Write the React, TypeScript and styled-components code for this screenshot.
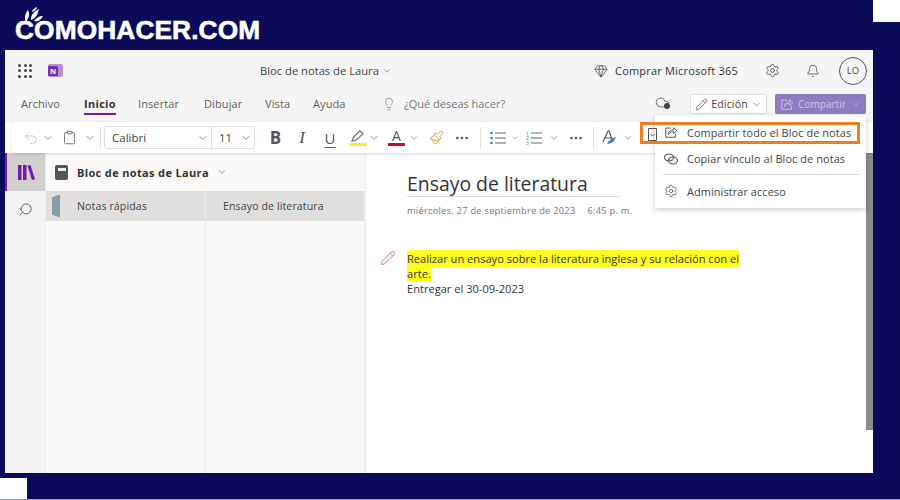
import React from "react";
import styled, { createGlobalStyle } from "styled-components";
import { ChevronDown, Undo2, Clipboard, Paintbrush, MoreHorizontal, Settings, Bell, Gem, Lightbulb, Cloud, Pencil, Search } from "lucide-react";

const Global = createGlobalStyle`
  html, body { margin: 0; padding: 0; width: 900px; height: 500px; overflow: hidden; background: #0b0b5a; }
  body { font-family: "Open Sans", "Noto Sans", sans-serif; color: #3b3a39; }
  * { box-sizing: border-box; }
`;
const Page = styled.div`position: relative; width: 900px; height: 500px; background: #0b0b5a; padding: 0 27px 26px 5px; border-bottom: 1px solid #9a9ac4; display: flex; flex-direction: column; overflow: hidden;`;
const Corner = styled.div<{ $tr?: boolean }>`
  position: absolute; background: #fff; width: 27px; height: 22px;
  ${p => p.$tr ? "top: 0; right: 0;" : "bottom: -1px; left: 0;"}
`;
const BrandBar = styled.div`height: 50px; display: flex; align-items: flex-end; padding: 0 0 5px 10px; position: relative;`;
const BrandText = styled.div`font-family: "Liberation Sans", sans-serif; font-weight: 700; font-size: 26.3px; line-height: 30px; letter-spacing: 0.1px; color: #fff; -webkit-text-stroke: 0.6px #fff;`;
const Sprout = styled.svg`position: absolute; left: 19px; top: 7px;`;
const Window = styled.div`position: relative; flex: 1; background: #fff; display: flex; flex-direction: column; overflow: hidden;`;
const Header = styled.div`height: 45px; flex: none; background: #f5f5f5; display: flex; align-items: center; padding: 0 6px 4px 13px;`;
const Waffle = styled.div`display: grid; grid-template-columns: repeat(3, 3px); gap: 2.5px; width: 14px;`;
const Dot = styled.span`width: 3px; height: 3px; background: #444; border-radius: 50%;`;
const AppLogo = styled.div`margin-left: 16px; width: 15px; height: 13px; background: #b98ad6; border-radius: 2px; display: flex; align-items: center;`;
const AppLogoTile = styled.div`width: 10px; height: 10px; background: #7a2fae; color: #fff; border-radius: 1px; font-size: 7.5px; line-height: 10px; font-weight: 700; text-align: center;`;
const DocTitle = styled.div`margin-left: 197px; width: 334px; font-size: 11.2px; color: #444; display: flex; align-items: center; gap: 3px;`;
const Buy = styled.div`width: 171px; display: flex; align-items: center; gap: 7px; font-size: 11px; letter-spacing: .2px; color: #333;`;
const HeadIcon = styled.div<{ $w: number }>`width: ${p => p.$w}px; display: flex; color: #444; position: relative; flex: none;`;
const CloudDot = styled.span`position: absolute; left: 9px; top: 8px; width: 6px; height: 6px; border-radius: 50%; background: #444;`;
const Avatar = styled.div`width: 28px; height: 28px; border: 1px solid #555; border-radius: 50%; font-size: 9.5px; display: flex; align-items: center; justify-content: center; color: #444;`;
const TabRow = styled.div`height: 27px; flex: none; background: #f5f5f5; display: flex; align-items: flex-start; padding-left: 16px;`;
const Tab = styled.div<{ $w: number; $on?: boolean }>`
  width: ${p => p.$w}px; height: 21px; font-size: 11px; line-height: 17px; letter-spacing: ${p => p.$on ? ".3px" : ".1px"}; color: ${p => p.$on ? "#333" : "#605e5c"}; font-weight: ${p => p.$on ? 700 : 400}; position: relative;
  ${p => p.$on ? `&::after { content: ""; position: absolute; left: 0; top: 18px; width: 32px; height: 2px; background: #7719aa; }` : ""}
`;
const Ask = styled.div`width: 273px; margin-left: 1px; font-size: 11px; line-height: 17px; color: #777; display: flex; align-items: center; gap: 8px;`;
const EditBtn = styled.div`margin-left: 20px; width: 77px; height: 20px; margin-top: -1px; background: #fff; border: 1px solid #ddd; border-radius: 2px; display: flex; align-items: center; justify-content: center; gap: 3px; font-size: 10.5px; letter-spacing: .2px; color: #444;`;
const ShareBtn = styled.div`margin-left: 8px; width: 91px; height: 20px; margin-top: -1px; background: #8e7cc3; border-radius: 2px; display: flex; align-items: center; justify-content: center; gap: 4px; font-size: 10px; color: #c9c0e6;`;
const Toolbar = styled.div`height: 31px; flex: none; margin: 0 0 0 7px; padding-left: 10px; background: #fff; border-radius: 4px 0 0 4px; box-shadow: 0 1px 3px rgba(0,0,0,.14); display: flex; align-items: center; position: relative; z-index: 1;`;
const TB = styled.div<{ $w: number; $c?: string }>`width: ${p => p.$w}px; flex: none; display: flex; align-items: center; justify-content: center; color: ${p => p.$c || "#555"};`;
const Sep = styled.div<{ $l?: number }>`width: 1px; height: 22px; background: #e3e3e3; flex: none; margin: 0 3px 0 ${p => p.$l ?? 3}px;`;
const FontBox = styled.div`width: 108px; height: 23px; flex: none; border: 1px solid #e0e0e0; border-radius: 3px 0 0 3px; display: flex; align-items: center; justify-content: space-between; padding: 0 2px 0 7px; font-size: 11.5px; color: #444;`;
const SizeBox = styled(FontBox)`width: 43px; border-left: 0; border-radius: 0 3px 3px 0; padding-left: 7px;`;
const BoldGlyph = styled.span`font-size: 17px; font-weight: 700; color: #555;`;
const ItalicGlyph = styled.span`font-family: "Liberation Serif", serif; font-style: italic; font-size: 17px; color: #555;`;
const UnderGlyph = styled.span`font-size: 15px; color: #555; text-decoration: underline; text-underline-offset: 3px; text-decoration-thickness: 1px;`;
const Stack = styled.div`display: flex; flex-direction: column; align-items: center; width: 16px; flex: none;`;
const Bar = styled.div<{ $c: string }>`width: 17px; height: 3px; background: ${p => p.$c}; flex: none;`;
const LetterA = styled.span`font-size: 14px; line-height: 14px; color: #555;`;
const Body = styled.div`flex: 1; min-height: 0; display: flex;`;
const Rail = styled.div`width: 41px; flex: none; background: #f3f2f1; display: flex; flex-direction: column; border-right: 1px solid #eee;`;
const RailOn = styled.div`height: 38px; background: #d2d0ce; border-left: 2px solid #7719aa; display: flex; align-items: center; justify-content: center;`;
const RailItem = styled.div`height: 36px; display: flex; align-items: center; justify-content: center; color: #555;`;
const Nav = styled.div`width: 320px; flex: none; background: #faf9f8; display: flex; flex-direction: column; border-right: 1px solid #eee;`;
const NotebookRow = styled.div`height: 38px; flex: none; display: flex; align-items: center; padding-left: 9px; font-size: 11px; font-weight: 700; letter-spacing: .35px; color: #333;`;
const NotebookIcon = styled.div`width: 13px; height: 15px; background: #555; border-radius: 2px; margin-right: 9px; display: flex; justify-content: center; padding-top: 3px;`;
const NotebookLine = styled.div`width: 8px; height: 3px; background: #eee;`;
const NotebookChev = styled.div`margin-left: 8px; display: flex;`;
const Columns = styled.div`flex: 1; display: flex;`;
const Col = styled.div<{ $w: number }>`width: ${p => p.$w}px; flex: none; border-right: 1px solid #eeedec;`;
const Row = styled.div<{ $pad: number }>`height: 30px; background: #e1dfdd; display: flex; align-items: center; font-size: 10.6px; letter-spacing: .1px; color: #444; padding-left: ${p => p.$pad}px; position: relative;`;
const SectionTab = styled.div`width: 8px; height: 23px; background: #8a9ba3; margin-right: 17px; margin-left: 6px; clip-path: polygon(0 12%, 100% 0, 100% 100%, 0 88%);`;
const Content = styled.div`flex: 1; position: relative; padding: 19px 0 0 41px; display: flex;`;
const Note = styled.div`width: 345px;`;
const Title = styled.div`font-size: 19.4px; line-height: 24px; width: 212px; color: #333; border-bottom: 1px solid #ddd; white-space: nowrap;`;
const DateLine = styled.div`margin-top: 8px; font-size: 9.3px; line-height: 12px; letter-spacing: .25px; color: #777; display: flex; gap: 12px;`;
const Para = styled.div`margin-top: 34px; font-size: 11.1px; line-height: 15px; color: #333; position: relative;`;
const Mark = styled.mark`background: #ffff1e; color: #333; padding: 1px 0;`;
const PenMark = styled.div`position: absolute; left: -27px; top: -1px; color: #c26a75;`;
const Scroll = styled.div`position: absolute; right: 0; top: 0; width: 7px; height: 277px; background: #8b8b8b;`;
const Menu = styled.div`position: absolute; left: 650px; top: 65px; width: 211px; height: 93px; background: #fff; box-shadow: 0 2px 6px rgba(0,0,0,.2); z-index: 3; padding: 6px 0 0 9px; display: flex; flex-direction: column;`;
const MenuItem = styled.div<{ $h: number }>`height: ${p => p.$h}px; flex: none; display: flex; align-items: center; gap: 9px; font-size: 10.9px; letter-spacing: .1px; color: #444; white-space: nowrap;`;
const MenuSep = styled.div`height: 1px; width: 197px; background: #ddd; margin: 0 0 4px -1px; flex: none;`;
const Highlight = styled.div`position: absolute; left: 635px; top: 72px; width: 220px; height: 22px; border: 3px solid #ed7d22; z-index: 4; pointer-events: none;`;
const Stub = styled.div`position: absolute; left: 5px; top: 3px; display: flex;`;

const ShareIcon = ({ c = "#555", s = 14 }: { c?: string; s?: number }) => (
  <svg width={s} height={s} viewBox="0 0 16 16" fill="none" stroke={c} strokeWidth="1.1">
    <path d="M8 3.500H2v10.500h11V10" />
    <path d="M5 11c0-3.500 2.500-5.500 6-5.500V3l3.500 3.500-3.500 3.500V7.500c-2.500 0-4.500 1-6 3.500z" />
  </svg>
);
const HighlighterIcon = () => (
  <svg width="16" height="13" viewBox="0 0 16 13" fill="none" stroke="#666" strokeWidth="1.1">
    <path d="M2 11l1.500-4L10 .8l3 3L6.500 10 2 11z" />
  </svg>
);
const Library = () => (
  <svg width="17" height="15" viewBox="0 0 17 15" fill="#7719aa"><rect x="0" y="0" width="3.500" height="15" /><rect x="5" y="0" width="3.500" height="15" /><path d="M9.500 0.800l3-.8L17 14.200l-3 .8z" /></svg>
);
const StylesIcon = () => (
  <svg width="18" height="17" viewBox="0 0 18 17" fill="none"><path d="M2 13L7 2h1l4 11M4 9h6" stroke="#555" strokeWidth="1.2" /><path d="M6 15c1-3 5-6 9-7-1 3-4 7-9 7z" fill="#3f82c4" /></svg>
);
const BulletIcon = () => (
  <svg width="16" height="14" viewBox="0 0 16 14">
    <circle cx="1.500" cy="2" r="1.300" fill="#2f7fb8" /><circle cx="1.500" cy="7" r="1.300" fill="#2f7fb8" /><circle cx="1.500" cy="12" r="1.300" fill="#2f7fb8" />
    <path d="M5 2h11M5 7h11M5 12h11" stroke="#666" strokeWidth="1" />
  </svg>
);
const NumberIcon = () => (
  <svg width="16" height="14" viewBox="0 0 16 14">
    <text x="0" y="4.500" fontSize="5" fill="#2f7fb8" fontFamily="Open Sans">1</text>
    <text x="0" y="9.200" fontSize="5" fill="#2f7fb8" fontFamily="Open Sans">2</text>
    <text x="0" y="13.800" fontSize="5" fill="#2f7fb8" fontFamily="Open Sans">3</text>
    <path d="M5 2h11M5 7h11M5 12h11" stroke="#666" strokeWidth="1" />
  </svg>
);
const DocDown = () => (
  <svg width="9" height="13" viewBox="0 0 9 13" fill="none" stroke="#555" strokeWidth="1">
    <path d="M.5 .5h8v12h-8zM2.500 6l2 2 2-2" />
  </svg>
);
const LinkRings = () => (
  <svg width="14" height="14" viewBox="0 0 14 14" fill="none" stroke="#555" strokeWidth="1.1">
    <ellipse cx="5" cy="5.500" rx="4.500" ry="3.500" />
    <ellipse cx="9" cy="8.500" rx="4.500" ry="3.500" />
  </svg>
);
const Chev = ({ s = 12 }: { s?: number }) => <ChevronDown size={s} strokeWidth={1.3} />;

export default function App() {
  return (
    <Page>
      <Global />
      <Corner $tr />
      <Corner />
      <BrandBar>
        <Sprout width="19" height="15" viewBox="0 0 19 15" fill="#fff">
          <path d="M2 15C0 11 1 7 4 3c2 4 1 8-2 12zM7 13c0-5 2-8 8-11-1 5-3 9-8 11zM8 5c0-2 2-4 5-5 0 2-2 4-5 5zM10 14c2-3 5-5 9-5-2 4-5 6-9 5z" />
        </Sprout>
        <BrandText>COMOHACER.COM</BrandText>
      </BrandBar>
      <Window>
        <Header>
          <Waffle>{Array.from({ length: 9 }).map((_, i) => <Dot key={i} />)}</Waffle>
          <AppLogo><AppLogoTile>N</AppLogoTile></AppLogo>
          <DocTitle>Bloc de notas de Laura <Chev s={10} /></DocTitle>
          <Buy><Gem size={14} strokeWidth={1.2} />Comprar Microsoft 365</Buy>
          <HeadIcon $w={41}><Settings size={15} strokeWidth={1.3} /></HeadIcon>
          <HeadIcon $w={33}><Bell size={14} strokeWidth={1.3} /></HeadIcon>
          <Avatar>LO</Avatar>
        </Header>
        <TabRow>
          <Tab $w={63}>Archivo</Tab>
          <Tab $w={54} $on>Inicio</Tab>
          <Tab $w={66}>Insertar</Tab>
          <Tab $w={61}>Dibujar</Tab>
          <Tab $w={48}>Vista</Tab>
          <Tab $w={68}>Ayuda</Tab>
          <Ask><Lightbulb size={14} strokeWidth={1.2} />¿Qué deseas hacer?</Ask>
          <HeadIcon $w={15}><Cloud size={15} strokeWidth={1.2} /><CloudDot /></HeadIcon>
          <EditBtn><Pencil size={13} strokeWidth={1.2} />Edición <Chev s={11} /></EditBtn>
          <ShareBtn><ShareIcon c="#c9c0e6" s={14} />Compartir <Chev s={11} /></ShareBtn>
        </TabRow>
        <Toolbar>
          <TB $w={18} $c="#bbb"><Undo2 size={16} strokeWidth={1.2} /></TB>
          <TB $w={16}><Chev /></TB>
          <TB $w={26}><Clipboard size={15} strokeWidth={1.2} /></TB>
          <TB $w={15}><Chev /></TB>
          <Sep />
          <FontBox>Calibri <Chev /></FontBox>
          <SizeBox>11 <Chev /></SizeBox>
          <TB $w={41}><BoldGlyph>B</BoldGlyph></TB>
          <TB $w={12}><ItalicGlyph>I</ItalicGlyph></TB>
          <TB $w={44}><UnderGlyph>U</UnderGlyph></TB>
          <TB $w={12}><Stack><HighlighterIcon /><Bar $c="#f2ef3c" /></Stack></TB>
          <TB $w={20}><Chev /></TB>
          <TB $w={25}><Stack><LetterA>A</LetterA><Bar $c="#c8101e" /></Stack></TB>
          <TB $w={10}><Chev /></TB>
          <TB $w={34} $c="#c89a3c"><Paintbrush size={15} strokeWidth={1.4} /></TB>
          <TB $w={18}><MoreHorizontal size={16} strokeWidth={2} /></TB>
          <Sep $l={9} />
          <TB $w={27}><BulletIcon /></TB>
          <TB $w={8}><Chev /></TB>
          <TB $w={30}><NumberIcon /></TB>
          <TB $w={10}><Chev /></TB>
          <TB $w={33}><MoreHorizontal size={16} strokeWidth={2} /></TB>
          <Sep $l={1} />
          <TB $w={26}><StylesIcon /></TB>
          <TB $w={10}><Chev /></TB>
        </Toolbar>
        <Body>
          <Rail>
            <RailOn><Library /></RailOn>
            <RailItem><Search size={15} strokeWidth={1.4} style={{ transform: "scaleX(-1)" }} /></RailItem>
          </Rail>
          <Nav>
            <NotebookRow><NotebookIcon><NotebookLine /></NotebookIcon>Bloc de notas de Laura<NotebookChev><Chev s={10} /></NotebookChev></NotebookRow>
            <Columns>
              <Col $w={160}><Row $pad={0}><SectionTab />Notas rápidas</Row></Col>
              <Col $w={159}><Row $pad={17}>Ensayo de literatura</Row></Col>
            </Columns>
          </Nav>
          <Content>
            <Note>
              <Title>Ensayo de literatura</Title>
              <DateLine><span>miércoles, 27 de septiembre de 2023</span><span>6:45 p. m.</span></DateLine>
              <Para>
                <PenMark><Pencil size={16} strokeWidth={1.3} /></PenMark>
                <Mark>Realizar un ensayo sobre la literatura inglesa y su relación con el arte.</Mark><br />
                Entregar el 30-09-2023
              </Para>
            </Note>
            <Scroll />
          </Content>
        </Body>
        <Menu>
          <MenuItem $h={22}><ShareIcon />Compartir todo el Bloc de notas</MenuItem>
          <MenuItem $h={31}><LinkRings />Copiar vínculo al Bloc de notas</MenuItem>
          <MenuSep />
          <MenuItem $h={24}><Settings size={14} strokeWidth={1.2} />Administrar acceso</MenuItem>
        </Menu>
        <Highlight>
          <Stub><DocDown /></Stub>
        </Highlight>
      </Window>
    </Page>
  );
}
